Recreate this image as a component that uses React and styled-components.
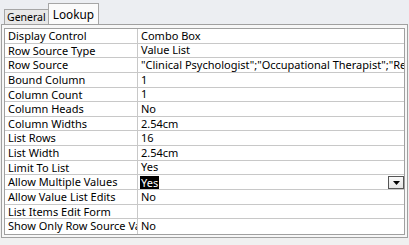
import React from 'react';
import styled, { createGlobalStyle } from 'styled-components';

const GlobalStyle = createGlobalStyle`
  html, body {
    margin: 0;
    padding: 0;
    background: #f0f0f0;
  }
  body {
    font-family: "Noto Sans", "Open Sans", sans-serif;
    font-size: 11px;
    color: #000;
  }
`;

const Page = styled.div`
  width: 409px;
  height: 245px;
  display: flex;
  flex-direction: column;
  overflow: hidden;
  background: #f0f0f0;
`;

const TabBar = styled.div`
  height: 24px;
  flex-shrink: 0;
  display: flex;
  align-items: flex-end;
  padding-left: 4px;
  background: #eceef2;
`;

const Tab = styled.div`
  box-sizing: border-box;
  height: ${(p) => (p.$active ? 21 : 15)}px;
  padding: ${(p) => (p.$active ? '3px 4px 0 4px' : '0 2px')};
  margin-right: ${(p) => (p.$active ? 0 : -1)}px;
  display: flex;
  align-items: ${(p) => (p.$active ? 'flex-start' : 'center')};
  border: 1px solid #a6a6a6;
  border-bottom: none;
  background: ${(p) => (p.$active ? '#fbfbfb' : '#e8e8e8')};
  font-size: ${(p) => (p.$active ? 11.8 : 10.5)}px;
  line-height: 15px;
  position: relative;
  z-index: ${(p) => (p.$active ? 1 : 0)};
`;

const Sheet = styled.div`
  box-sizing: border-box;
  width: 407px;
  margin-left: 1px;
  padding: 3px 2px 2px 2px;
  border: 1px solid #a0a0a0;
  background: #f7f7f7;
`;

const Grid = styled.div`
  border: 1px solid #a0a0a0;
  background: #fff;
  display: flex;
  flex-direction: column;
`;

const Row = styled.div`
  box-sizing: border-box;
  height: 14.64px;
  display: grid;
  grid-template-columns: 133px 1fr;
  border-bottom: ${(p) => (p.$last ? 'none' : '1px solid #c8c8c8')};
`;

const Label = styled.div`
  padding-left: 3px;
  border-right: 1px solid #c8c8c8;
  white-space: nowrap;
  overflow: hidden;
  line-height: 14px;
`;

const Value = styled.div`
  padding-left: 3px;
  display: flex;
  align-items: center;
  white-space: nowrap;
  overflow: hidden;
  line-height: 14px;
`;

const Selected = styled.span`
  background: #000;
  color: #fff;
  padding: 0 1px;
  margin-left: -1px;
  line-height: 13px;
`;

const DropButton = styled.div`
  box-sizing: border-box;
  margin-left: auto;
  width: 16px;
  height: 13px;
  border: 1px solid #555;
  background: linear-gradient(#fafafa, #e4e4e4);
  display: flex;
  align-items: flex-end;
  justify-content: center;
  padding-bottom: 3px;
  flex-shrink: 0;
`;

const rows = [
  ['Display Control', 'Combo Box'],
  ['Row Source Type', 'Value List'],
  ['Row Source', '"Clinical Psychologist";"Occupational Therapist";"Registered Nurse"'],
  ['Bound Column', '1'],
  ['Column Count', '1'],
  ['Column Heads', 'No'],
  ['Column Widths', '2.54cm'],
  ['List Rows', '16'],
  ['List Width', '2.54cm'],
  ['Limit To List', 'Yes'],
  ['Allow Multiple Values', 'Yes', true],
  ['Allow Value List Edits', 'No'],
  ['List Items Edit Form', ''],
  ['Show Only Row Source Values', 'No'],
];

export default function App() {
  return (
    <Page>
      <GlobalStyle />
      <TabBar>
        <Tab>General</Tab>
        <Tab $active>Lookup</Tab>
      </TabBar>
      <Sheet>
        <Grid>
          {rows.map(([label, value, selected], i) => (
            <Row key={label} $last={i === rows.length - 1}>
              <Label>{label}</Label>
              <Value>
                {selected ? <Selected>{value}</Selected> : value}
                {selected && (
                  <DropButton>
                    <svg width="7" height="4" viewBox="0 0 7 4">
                      <path d="M0 0h7L3.5 4z" fill="#000" />
                    </svg>
                  </DropButton>
                )}
              </Value>
            </Row>
          ))}
        </Grid>
      </Sheet>
    </Page>
  );
}
